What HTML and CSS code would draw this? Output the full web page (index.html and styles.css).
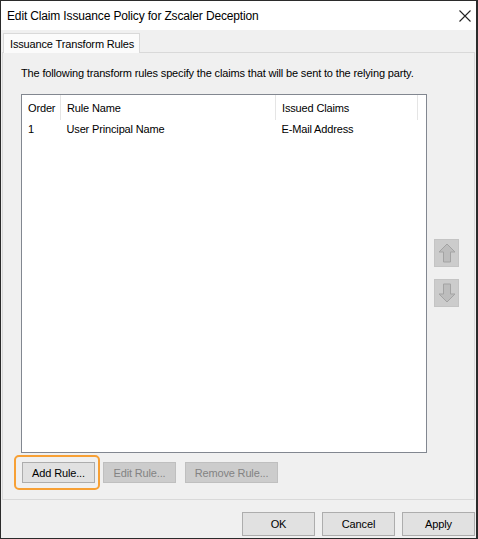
FILE: index.html
```html
<!DOCTYPE html>
<html>
<head>
	<meta charset="utf-8">
	<meta name="viewport" content="width=device-width, initial-scale=1">
	<title>Edit Claim Issuance Policy</title>
	<link rel="stylesheet" href="styles.css">
</head>
<body>
	<div class="window">
		<div class="titlebar">
			<span class="title">Edit Claim Issuance Policy for Zscaler Deception</span>
			<svg class="close" width="12" height="12" viewBox="0 0 12 12">
				<path d="M0.5 0.5 L11.5 11.5 M11.5 0.5 L0.5 11.5" stroke="#222" stroke-width="1.1" fill="none"/>
			</svg>
		</div>

		<div class="tabs">
			<div class="tab">Issuance Transform Rules</div>
		</div>

		<div class="panel">
			<p class="intro">The following transform rules specify the claims that will be sent to the relying party.</p>

			<div class="list-row">
				<div class="list">
					<table class="rules">
						<thead>
							<tr>
								<th class="col-order">Order</th>
								<th class="col-name">Rule Name</th>
								<th class="col-claims">Issued Claims</th>
								<th class="col-rest"></th>
							</tr>
						</thead>
						<tbody>
							<tr>
								<td>1</td>
								<td>User Principal Name</td>
								<td>E-Mail Address</td>
								<td></td>
							</tr>
						</tbody>
					</table>
				</div>

				<div class="move-buttons">
					<div class="move-btn">
						<svg width="18" height="20" viewBox="0 0 18 20">
							<path d="M9 1 L17 9 L12.5 9 L12.5 19 L5.5 19 L5.5 9 L1 9 Z" fill="#bdbdbd" stroke="#a3a3a3" stroke-width="1" stroke-linejoin="round"/>
						</svg>
					</div>
					<div class="move-btn">
						<svg width="18" height="20" viewBox="0 0 18 20">
							<path d="M9 19 L17 11 L12.5 11 L12.5 1 L5.5 1 L5.5 11 L1 11 Z" fill="#bdbdbd" stroke="#a3a3a3" stroke-width="1" stroke-linejoin="round"/>
						</svg>
					</div>
				</div>
			</div>

			<div class="rule-buttons">
				<div class="highlight">
					<button class="btn">Add Rule...</button>
				</div>
				<button class="btn" disabled>Edit Rule...</button>
				<button class="btn btn-remove" disabled>Remove Rule...</button>
			</div>
		</div>

		<div class="footer">
			<button class="btn btn-footer">OK</button>
			<button class="btn btn-footer">Cancel</button>
			<button class="btn btn-footer">Apply</button>
		</div>
	</div>
</body>
</html>
```

FILE: styles.css
```css
body {
    margin: 0;
    font-family: "Liberation Sans", Arial, sans-serif;
    font-size: 11px;
    letter-spacing: -0.15px;
    color: #000;
    background: #fff;
}
.window {
    width: 478px;
    height: 539px;
    box-sizing: border-box;
    border: 1px solid #2b2b2b;
    border-right-width: 2px;
    background-color: #f0f0f0;
    overflow: hidden;
}
.titlebar {
    height: 29px;
    background-color: #fff;
    display: flex;
    align-items: center;
    justify-content: space-between;
    padding: 0 4px 0 6px;
    font-size: 12px;
}
.close {
    margin-right: 1px;
}
.tabs {
    display: flex;
    padding: 2px 0 0 2px;
    height: 20px;
}
.tab {
    border: 1px solid #d9d9d9;
    border-bottom: none;
    background-color: #fbfbfb;
    padding: 4px 6px 0 6px;
    height: 20px;
    width: 137px;
    box-sizing: border-box;
    white-space: nowrap;
    position: relative;
    top: 1px;
}
.panel {
    margin: 0 1px;
    height: 448px;
    box-sizing: border-box;
    border: 1px solid #d9d9d9;
    background-color: #f0f0f0;
    padding: 14px 0 0 18px;
}
.intro {
    margin: 0 0 14px 0;
    line-height: 13px;
}
.list-row {
    display: flex;
    gap: 7px;
}
.list {
    width: 406px;
    height: 359px;
    box-sizing: border-box;
    border: 1px solid #828790;
    background-color: #fff;
}
.rules {
    border-collapse: collapse;
    width: 100%;
}
.rules th {
    font-weight: normal;
    text-align: left;
    height: 25px;
    padding: 0 0 0 6px;
    border-right: 1px solid #e5e5e5;
}
.rules td {
    height: 17px;
    padding: 0 0 0 6px;
}
.rules th.col-order {
    width: 32px;
}
.rules th.col-name {
    width: 208px;
}
.rules th.col-claims {
    width: 135px;
}
.rules th.col-rest {
    border-right: none;
}
.move-buttons {
    display: flex;
    flex-direction: column;
    justify-content: center;
    gap: 12px;
    padding-bottom: 2px;
}
.move-btn {
    width: 25px;
    height: 28px;
    box-sizing: border-box;
    background-color: #cccccc;
    border: 1px solid #c4c4c4;
    display: flex;
    align-items: center;
    justify-content: center;
}
.rule-buttons {
    display: flex;
    align-items: center;
    gap: 8px;
    margin-top: 9px;
}
.highlight {
    border: 2px solid #f7a035;
    border-radius: 5px;
    padding: 5px 3px 5px 6px;
    margin: -7px -5px -7px -7px;
    display: flex;
}
.btn {
    font-family: "Liberation Sans", Arial, sans-serif;
    font-size: 11px;
    letter-spacing: -0.15px;
    height: 21px;
    width: 73px;
    padding: 0;
    background-color: #e1e1e1;
    border: 1px solid #adadad;
    color: #000;
}
.btn:disabled {
    background-color: #cccccc;
    border-color: #bfbfbf;
    color: #838383;
}
.btn-remove {
    width: 93px;
    margin-left: 1px;
}
.footer {
    display: flex;
    justify-content: flex-end;
    gap: 7px;
    padding: 12px 1px 0 0;
}
.btn-footer {
    width: 73px;
    height: 24px;
}
```
